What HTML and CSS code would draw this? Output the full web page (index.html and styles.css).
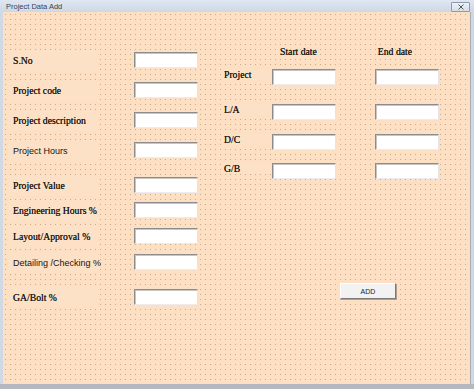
FILE: index.html
```
<!DOCTYPE html>
<html lang="en">
  <head>
    <meta charset="UTF-8" />
    <title>Project Data Add</title>
    <link rel="stylesheet" href="styles.css">
  </head>

  <body>
    <div class="window">
      <div class="titlebar">
        <span class="title">Project Data Add</span>
        <span class="close">
          <svg width="10" height="6" viewBox="0 0 10 6">
            <path d="M2.5 0.5 L7.5 5.5 M7.5 0.5 L2.5 5.5" stroke="#555" stroke-width="1" fill="none" />
          </svg>
        </span>
      </div>

      <div class="canvas">
        <div class="left-col">
          <div class="row">
            <div class="label">S.No</div>
            <input class="field" type="text" />
          </div>
          <div class="row gap-30">
            <div class="label">Project code</div>
            <input class="field" type="text" />
          </div>
          <div class="row gap-30">
            <div class="label">Project description</div>
            <input class="field" type="text" />
          </div>
          <div class="row gap-30">
            <div class="label sans">Project Hours</div>
            <input class="field" type="text" />
          </div>
          <div class="row gap-35">
            <div class="label">Project Value</div>
            <input class="field" type="text" />
          </div>
          <div class="row gap-25">
            <div class="label">Engineering Hours %</div>
            <input class="field" type="text" />
          </div>
          <div class="row gap-26">
            <div class="label">Layout/Approval %</div>
            <input class="field" type="text" />
          </div>
          <div class="row gap-26">
            <div class="label sans">Detailing /Checking %</div>
            <input class="field" type="text" />
          </div>
          <div class="row gap-35">
            <div class="label">GA/Bolt %</div>
            <input class="field" type="text" />
          </div>
        </div>

        <div class="right-col">
          <div class="date-head">
            <span class="head-start">Start date</span>
            <span class="head-end">End date</span>
          </div>
          <div class="date-row first">
            <span class="date-label">Project</span>
            <input class="field" type="text" />
            <input class="field end" type="text" />
          </div>
          <div class="date-row la">
            <span class="date-label">L/A</span>
            <input class="field" type="text" />
            <input class="field end" type="text" />
          </div>
          <div class="date-row dc">
            <span class="date-label">D/C</span>
            <input class="field" type="text" />
            <input class="field end" type="text" />
          </div>
          <div class="date-row gb">
            <span class="date-label">G/B</span>
            <input class="field" type="text" />
            <input class="field end" type="text" />
          </div>
          <button class="add-btn">ADD</button>
        </div>
      </div>
      <div class="bottom-bar"></div>
    </div>
  </body>
</html>
```

FILE: styles.css
```
body {
  margin: 0;
  font-family: "Liberation Serif", serif;
  background-color: #c8ccd2;
}

.window {
  width: 474px;
  height: 389px;
  display: flex;
  flex-direction: column;
  background-color: #cfd9e6;
}

.titlebar {
  height: 12px;
  display: flex;
  align-items: center;
  justify-content: space-between;
  padding: 0 4px 0 6px;
  background: linear-gradient(#dfe7f2, #cdd8e6);
}

.title {
  font-family: "Liberation Sans", sans-serif;
  font-size: 7.5px;
  color: #3a4250;
}

.close {
  width: 17px;
  height: 8px;
  margin-top: 2px;
  display: flex;
  align-items: center;
  justify-content: center;
  border: 1px solid #8e9aa8;
  border-radius: 1px;
  background: linear-gradient(#eef2f7, #d5dde8);
}

.canvas {
  flex: 1;
  display: flex;
  margin: 0 3px 0 3px;
  border-right: 1px solid #a9adb3;
  background-color: #fde0c3;
  background-image: conic-gradient(at 1px 1px, transparent 270deg, #cda987 270deg);
  background-size: 5px 5px;
  background-position: 2px 2px;
}

.bottom-bar {
  height: 5px;
  background-color: #b5b9bf;
}

.left-col {
  width: 190px;
  padding: 38px 0 0 5px;
}

.row {
  display: flex;
  align-items: flex-start;
  height: 21px;
}

.gap-25 { margin-top: 4px; }
.gap-26 { margin-top: 5px; }
.gap-30 { margin-top: 9px; }
.gap-35 { margin-top: 14px; }

.label {
  width: 90px;
  height: 21px;
  line-height: 22px;
  padding-left: 5px;
  box-sizing: border-box;
  background-color: #fde1c6;
  font-size: 9.7px;
  color: #231f1b;
  text-shadow: 0 0 0.3px #231f1b;
  white-space: nowrap;
}

.label.sans {
  font-family: "Liberation Sans", sans-serif;
  font-size: 9px;
  color: #141414;
  text-shadow: none;
}

.field {
  width: 64px;
  height: 16px;
  margin: 2px 0 0 auto;
  padding: 0;
  box-sizing: border-box;
  background-color: #ffffff;
  border-top: 1px solid #8c8c8c;
  border-left: 1px solid #8c8c8c;
  border-right: 1px solid #e4e4e4;
  border-bottom: 1px solid #ececec;
  box-shadow: inset 1px 1px 0 #c6c6c6;
}

.right-col {
  margin-left: 26px;
  padding-top: 34px;
}

.date-head {
  height: 12px;
  display: flex;
  font-size: 9.7px;
  color: #231f1b;
  text-shadow: 0 0 0.3px #231f1b;
}

.head-start { margin-left: 56px; }
.head-end { margin-left: 61px; }

.date-row {
  display: flex;
  align-items: flex-start;
  height: 16px;
}

.date-row .field {
  margin: 0;
}

.date-row .field.end {
  margin-left: 39px;
}

.date-row.first { margin-top: 11px; }
.date-row.la { margin-top: 19px; }
.date-row.dc { margin-top: 14px; }
.date-row.gb { margin-top: 13px; }

.date-label {
  width: 48px;
  line-height: 11px;
  font-size: 9.7px;
  color: #231f1b;
  text-shadow: 0 0 0.3px #231f1b;
  background-color: #fde1c6;
}

.add-btn {
  display: block;
  width: 56px;
  height: 16px;
  margin: 104px 0 0 116px;
  padding: 0;
  font-family: "Liberation Sans", sans-serif;
  font-size: 7px;
  color: #222;
  background-color: #f2f2f2;
  border-top: 1px solid #ffffff;
  border-left: 1px solid #ffffff;
  border-right: 1px solid #7a7a7a;
  border-bottom: 1px solid #7a7a7a;
  box-shadow: 1px 1px 0 #b0a090;
}
```
